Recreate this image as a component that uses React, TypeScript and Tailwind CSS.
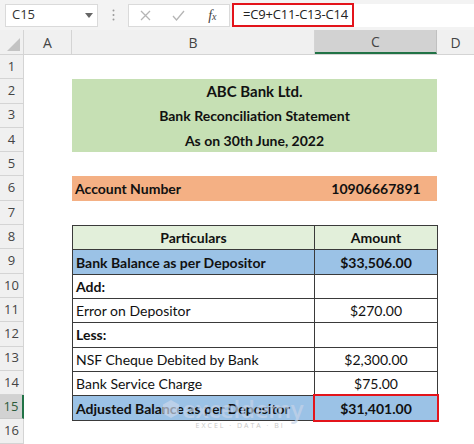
import React from 'react';

const ROWS = Array.from({ length: 16 }, (_, i) => i + 1);

function FormulaBar() {
  return (
    <div className="h-[30px] flex items-center bg-[#f3f3f3] pl-[5px] font-['Open_Sans',sans-serif]">
      <div className="w-[93px] h-[23px] bg-white border border-[#dadada] flex items-center justify-between pl-[6px] pr-[4px]">
        <span className="text-[13px] text-[#333]">C15</span>
        <svg width="8" height="5" viewBox="0 0 8 5">
          <path d="M0 0h8L4 5z" fill="#666" />
        </svg>
      </div>
      <div className="w-[30px] flex justify-center">
        <svg width="3" height="12" viewBox="0 0 3 12">
          <circle cx="1.5" cy="1.5" r="1" fill="#9a9a9a" />
          <circle cx="1.5" cy="6" r="1" fill="#9a9a9a" />
          <circle cx="1.5" cy="10.5" r="1" fill="#9a9a9a" />
        </svg>
      </div>
      <div className="w-[102px] h-[23px] bg-white border border-[#dadada] flex items-center">
        <div className="w-[34px] flex justify-center">
          <svg width="11" height="11" viewBox="0 0 11 11">
            <path d="M1 1l9 9M10 1l-9 9" stroke="#b5b5b5" strokeWidth="1.3" />
          </svg>
        </div>
        <div className="w-[34px] flex justify-center">
          <svg width="13" height="11" viewBox="0 0 13 11">
            <path d="M1 6l3.5 4L12 1" stroke="#b5b5b5" strokeWidth="1.3" fill="none" />
          </svg>
        </div>
        <div className="w-[34px] flex justify-center">
          <span className="font-['Liberation_Serif',serif] italic text-[14px] text-[#444]">
            f<span className="text-[10px]">x</span>
          </span>
        </div>
      </div>
      <div className="ml-[2px] flex-1 h-[23px] bg-white flex items-center">
        <div className="w-[122px] h-[24px] border-2 border-[#e3141b] flex items-center pl-[9px]">
          <span className="text-[13px] text-[#222] tracking-[-0.2px]">=C9+C11-C13-C14</span>
        </div>
      </div>
    </div>
  );
}

function ColumnHeaders() {
  return (
    <div className="h-[25px] flex bg-[#f0f0f0] border-b border-[#d4d4d4] text-[14px] text-[#444] font-['Open_Sans',sans-serif]">
      <div className="w-[24px] border-r border-[#d4d4d4] flex items-end justify-end p-[3px]">
        <svg width="13" height="13" viewBox="0 0 13 13">
          <path d="M13 0v13H0z" fill="#c3c3c3" />
        </svg>
      </div>
      <div className="w-[48px] border-r border-[#d4d4d4] flex items-center justify-center">A</div>
      <div className="w-[243px] border-r border-[#d4d4d4] flex items-center justify-center">B</div>
      <div className="w-[122px] bg-[#d2d2d2] border-r border-[#c0c0c0] border-b-2 border-b-[#217346] flex items-center justify-center">
        C
      </div>
      <div className="flex-1 flex items-center justify-center">D</div>
    </div>
  );
}

function RowHeaders() {
  return (
    <div className="w-[24px] bg-[#f0f0f0] font-['Open_Sans',sans-serif] text-[13px] text-[#444]">
      {ROWS.map(n => (
        <div
          key={n}
          className={
            n === 15
              ? 'h-[24.3px] flex items-center justify-center bg-[#d2d2d2] border-b border-[#c8c8c8] border-r-2 border-r-[#217346] text-[#2d5c3c]'
              : 'h-[24.3px] flex items-center justify-center border-b border-[#d4d4d4] border-r border-r-[#d4d4d4]'
          }
        >
          {n}
        </div>
      ))}
    </div>
  );
}

const tableRows = [
  { label: 'Bank Balance as per Depositor', amount: '$33,506.00', bold: true, blue: true },
  { label: 'Add:', amount: '', bold: true },
  { label: 'Error on Depositor', amount: '$270.00' },
  { label: 'Less:', amount: '', bold: true },
  { label: 'NSF Cheque Debited by Bank', amount: '$2,300.00' },
  { label: 'Bank Service Charge', amount: '$75.00' },
  { label: 'Adjusted Balance as per Depositor', amount: '$31,401.00', bold: true, blue: true, selected: true },
];

function Sheet() {
  return (
    <div className="flex-1 relative font-['Lato',sans-serif] text-[14px] text-[#111]">
      <div className="h-[24.3px]" />
      <div className="ml-[48px] w-[365px] h-[72.9px] bg-[#c6e0b4] flex flex-col font-bold">
        <div className="h-[24.3px] flex items-center justify-center text-[15px]">ABC Bank Ltd.</div>
        <div className="h-[24.3px] flex items-center justify-center">Bank Reconciliation Statement</div>
        <div className="h-[24.3px] flex items-center justify-center">As on 30th June, 2022</div>
      </div>
      <div className="h-[24.3px]" />
      <div className="ml-[48px] w-[365px] h-[24.3px] bg-[#f4b084] flex items-center font-bold">
        <div className="w-[243px] pl-[3px]">Account Number</div>
        <div className="flex-1 text-center">10906667891</div>
      </div>
      <div className="h-[24.3px]" />
      <div className="ml-[48px] w-[366px] border-[1.5px] border-[#3a3a3a]">
        <div className="h-[24.3px] flex bg-[#e2efda] font-bold border-b border-[#3a3a3a]">
          <div className="w-[242px] border-r border-[#3a3a3a] flex items-center justify-center">Particulars</div>
          <div className="flex-1 flex items-center justify-center">Amount</div>
        </div>
        {tableRows.map((r, i) => (
          <div
            key={r.label}
            className={`h-[24.3px] flex ${r.blue ? 'bg-[#9bc2e6]' : 'bg-white'} ${r.bold ? 'font-bold' : ''} ${
              i < tableRows.length - 1 ? 'border-b border-[#3a3a3a]' : ''
            }`}
          >
            <div className="w-[242px] border-r border-[#3a3a3a] flex items-center pl-[3px]">{r.label}</div>
            <div className="flex-1 relative flex items-center justify-center">
              {r.amount}
              {r.selected && (
                <div className="absolute inset-x-[-2px] top-[-2px] bottom-[-2px] border-[2.5px] border-[#e3141b]" />
              )}
            </div>
          </div>
        ))}
      </div>
      <div className="absolute left-[139px] top-[342px] flex flex-col items-center pointer-events-none">
        <div className="flex items-center gap-[3px]">
          <svg width="16" height="18" viewBox="0 0 16 18">
            <path d="M8 0l8 4.5v9L8 18 0 13.5v-9z" fill="#c9d6ea" opacity="0.7" />
          </svg>
          <span className="font-['Open_Sans',sans-serif] text-[24px] leading-[24px] font-semibold text-[#c5d3e8] opacity-70 tracking-[-0.3px]">
            exceldemy
          </span>
        </div>
        <span className="font-['Open_Sans',sans-serif] text-[7px] leading-[8px] mt-[1px] tracking-[2px] text-[#c8c8c8] ml-[14px]">
          EXCEL · DATA · BI
        </span>
      </div>
    </div>
  );
}

export default function App() {
  return (
    <div className="w-[474px] h-[444px] overflow-hidden bg-white flex flex-col">
      <FormulaBar />
      <ColumnHeaders />
      <div className="flex">
        <RowHeaders />
        <Sheet />
      </div>
    </div>
  );
}
